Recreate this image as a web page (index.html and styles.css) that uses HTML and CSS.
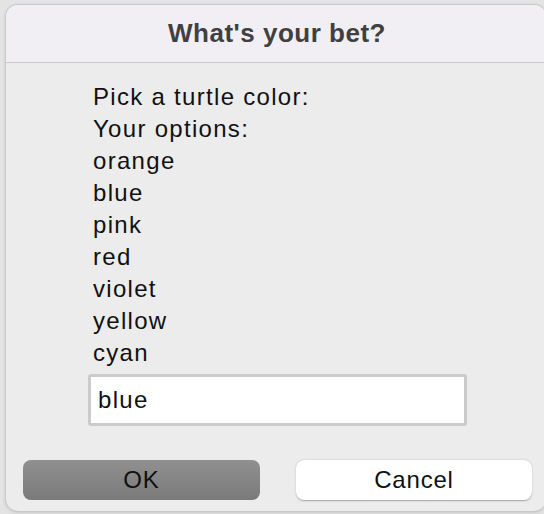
FILE: index.html
```html
<!DOCTYPE html>
<html>
<head>
<meta charset="utf-8">
<link rel="stylesheet" href="styles.css">
</head>
<body>
<div class="window">
  <div class="titlebar">What's your bet?</div>
  <div class="content">
    <div class="prompt">
      <div class="line">Pick a turtle color:</div>
      <div class="line">Your options:</div>
      <div class="line">orange</div>
      <div class="line">blue</div>
      <div class="line">pink</div>
      <div class="line">red</div>
      <div class="line">violet</div>
      <div class="line">yellow</div>
      <div class="line">cyan</div>
    </div>
    <div class="field"><span class="value">blue</span></div>
    <div class="buttons">
      <div class="btn ok">OK</div>
      <div class="btn cancel">Cancel</div>
    </div>
  </div>
</div>
</body>
</html>
```
FILE: styles.css
```css
html, body {
  margin: 0;
  padding: 0;
}
body {
  width: 544px;
  height: 514px;
  background: #e4e4e4;
  font-family: "Liberation Sans", Arial, sans-serif;
  color: #111;
  overflow: hidden;
  padding: 5px 0 0 6px;
  box-sizing: border-box;
}
.window {
  width: 540px;
  height: 506px;
  background: #ececec;
  border-radius: 12px;
  box-shadow: 0 0 0 1px #c9c9c9, 0 1px 4px rgba(0,0,0,0.18);
  overflow: hidden;
  display: flex;
  flex-direction: column;
}
.titlebar {
  height: 57px;
  flex: none;
  background: #f2eff4;
  border-bottom: 1px solid #cbcacd;
  display: flex;
  align-items: center;
  justify-content: center;
  font-weight: bold;
  font-size: 26px;
  color: #404040;
  padding-left: 2px;
  letter-spacing: 0.5px;
}
.content {
  padding: 18px 0 0 0;
  display: flex;
  flex-direction: column;
}
.prompt {
  padding-left: 87px;
  font-size: 24px;
  letter-spacing: 1.3px;
}
.line {
  height: 32px;
  line-height: 32px;
}
.field {
  margin: 5px 0 0 82px;
  width: 366px;
  height: 46px;
  border: 3px solid #cbcbcb;
  border-radius: 3px;
  background: #fff;
  display: flex;
  align-items: center;
  padding-left: 7px;
  font-size: 24px;
  letter-spacing: 1.3px;
}
.buttons {
  margin-top: 34px;
  display: flex;
  gap: 36px;
  padding-left: 17px;
}
.btn {
  height: 40px;
  border-radius: 8px;
  display: flex;
  align-items: center;
  justify-content: center;
  font-size: 24px;
  letter-spacing: 0.8px;
}
.ok {
  width: 237px;
  background: linear-gradient(#909090, #7a7a7a);
  color: #111;
}
.cancel {
  width: 236px;
  background: #ffffff;
  box-shadow: 0 0.5px 1.5px rgba(0,0,0,0.3);
}
```
